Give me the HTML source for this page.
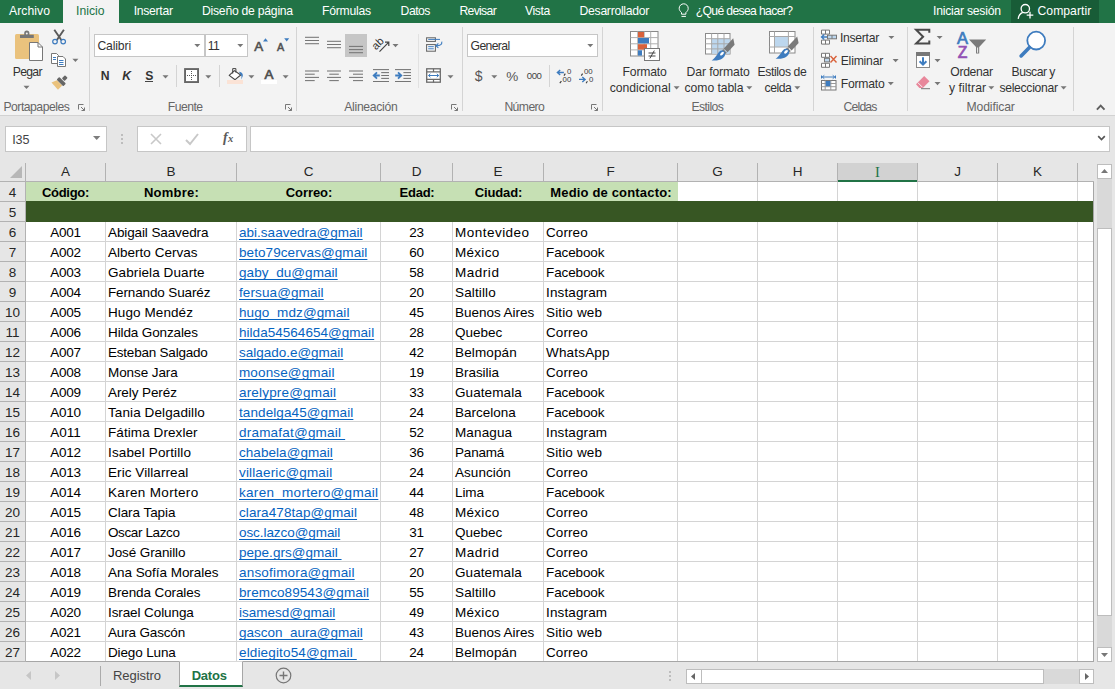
<!DOCTYPE html>
<html lang="es"><head><meta charset="utf-8"><title>Datos - Excel</title>
<style>
html,body{margin:0;padding:0;}
body{width:1115px;height:689px;overflow:hidden;background:#e6e6e6;position:relative;font-family:"Liberation Sans",sans-serif;}
.b{position:absolute;box-sizing:border-box;}
.t{position:absolute;white-space:nowrap;line-height:1;}
svg{position:absolute;overflow:visible;}
.c{position:absolute;white-space:nowrap;font-size:13.5px;line-height:20px;height:20px;color:#000;}
.lnk{color:#0563c1;text-decoration:underline;text-decoration-thickness:1px;text-underline-offset:2px;text-decoration-skip-ink:none;}
</style></head><body>
<div class="b" style="left:26px;top:182px;width:1068px;height:480px;background:#fff;"></div>
<div class="b" style="left:26px;top:201px;width:1068px;height:1px;background:#d4d4d4;"></div>
<div class="b" style="left:26px;top:221px;width:1068px;height:1px;background:#d4d4d4;"></div>
<div class="b" style="left:26px;top:241px;width:1068px;height:1px;background:#d4d4d4;"></div>
<div class="b" style="left:26px;top:261px;width:1068px;height:1px;background:#d4d4d4;"></div>
<div class="b" style="left:26px;top:281px;width:1068px;height:1px;background:#d4d4d4;"></div>
<div class="b" style="left:26px;top:301px;width:1068px;height:1px;background:#d4d4d4;"></div>
<div class="b" style="left:26px;top:321px;width:1068px;height:1px;background:#d4d4d4;"></div>
<div class="b" style="left:26px;top:341px;width:1068px;height:1px;background:#d4d4d4;"></div>
<div class="b" style="left:26px;top:361px;width:1068px;height:1px;background:#d4d4d4;"></div>
<div class="b" style="left:26px;top:381px;width:1068px;height:1px;background:#d4d4d4;"></div>
<div class="b" style="left:26px;top:401px;width:1068px;height:1px;background:#d4d4d4;"></div>
<div class="b" style="left:26px;top:421px;width:1068px;height:1px;background:#d4d4d4;"></div>
<div class="b" style="left:26px;top:441px;width:1068px;height:1px;background:#d4d4d4;"></div>
<div class="b" style="left:26px;top:461px;width:1068px;height:1px;background:#d4d4d4;"></div>
<div class="b" style="left:26px;top:481px;width:1068px;height:1px;background:#d4d4d4;"></div>
<div class="b" style="left:26px;top:501px;width:1068px;height:1px;background:#d4d4d4;"></div>
<div class="b" style="left:26px;top:521px;width:1068px;height:1px;background:#d4d4d4;"></div>
<div class="b" style="left:26px;top:541px;width:1068px;height:1px;background:#d4d4d4;"></div>
<div class="b" style="left:26px;top:561px;width:1068px;height:1px;background:#d4d4d4;"></div>
<div class="b" style="left:26px;top:581px;width:1068px;height:1px;background:#d4d4d4;"></div>
<div class="b" style="left:26px;top:601px;width:1068px;height:1px;background:#d4d4d4;"></div>
<div class="b" style="left:26px;top:621px;width:1068px;height:1px;background:#d4d4d4;"></div>
<div class="b" style="left:26px;top:641px;width:1068px;height:1px;background:#d4d4d4;"></div>
<div class="b" style="left:26px;top:661px;width:1068px;height:1px;background:#d4d4d4;"></div>
<div class="b" style="left:105px;top:182px;width:1px;height:480px;background:#d4d4d4;"></div>
<div class="b" style="left:236px;top:182px;width:1px;height:480px;background:#d4d4d4;"></div>
<div class="b" style="left:380px;top:182px;width:1px;height:480px;background:#d4d4d4;"></div>
<div class="b" style="left:452px;top:182px;width:1px;height:480px;background:#d4d4d4;"></div>
<div class="b" style="left:543px;top:182px;width:1px;height:480px;background:#d4d4d4;"></div>
<div class="b" style="left:677px;top:182px;width:1px;height:480px;background:#d4d4d4;"></div>
<div class="b" style="left:757px;top:182px;width:1px;height:480px;background:#d4d4d4;"></div>
<div class="b" style="left:837px;top:182px;width:1px;height:480px;background:#d4d4d4;"></div>
<div class="b" style="left:917px;top:182px;width:1px;height:480px;background:#d4d4d4;"></div>
<div class="b" style="left:997px;top:182px;width:1px;height:480px;background:#d4d4d4;"></div>
<div class="b" style="left:1077px;top:182px;width:1px;height:480px;background:#d4d4d4;"></div>
<div class="b" style="left:26px;top:182px;width:652px;height:20px;background:#c6e0b4;"></div>
<div class="b" style="left:26px;top:201px;width:1068px;height:21px;background:#375623;"></div>
<div class="b" style="left:1093px;top:181px;width:1px;height:481px;background:#a6a6a6;"></div>
<div class="b" style="left:0px;top:661px;width:1094px;height:1px;background:#a6a6a6;"></div>
<div class="b" style="left:0px;top:162px;width:1094px;height:20px;background:#e6e6e6;"></div>
<div class="b" style="left:0px;top:181px;width:1094px;height:1px;background:#b2b2b2;"></div>
<div class="b" style="left:25px;top:163px;width:1px;height:19px;background:#b2b2b2;"></div>
<div class="b" style="left:105px;top:163px;width:1px;height:19px;background:#b2b2b2;"></div>
<div class="b" style="left:236px;top:163px;width:1px;height:19px;background:#b2b2b2;"></div>
<div class="b" style="left:380px;top:163px;width:1px;height:19px;background:#b2b2b2;"></div>
<div class="b" style="left:452px;top:163px;width:1px;height:19px;background:#b2b2b2;"></div>
<div class="b" style="left:543px;top:163px;width:1px;height:19px;background:#b2b2b2;"></div>
<div class="b" style="left:677px;top:163px;width:1px;height:19px;background:#b2b2b2;"></div>
<div class="b" style="left:757px;top:163px;width:1px;height:19px;background:#b2b2b2;"></div>
<div class="b" style="left:837px;top:163px;width:1px;height:19px;background:#b2b2b2;"></div>
<div class="b" style="left:917px;top:163px;width:1px;height:19px;background:#b2b2b2;"></div>
<div class="b" style="left:997px;top:163px;width:1px;height:19px;background:#b2b2b2;"></div>
<div class="b" style="left:1077px;top:163px;width:1px;height:19px;background:#b2b2b2;"></div>
<div class="b" style="left:838px;top:163px;width:79px;height:18px;background:#d2d2d2;"></div>
<div class="b" style="left:838px;top:180px;width:79px;height:2px;background:#217346;"></div>
<div class="t" style="left:65.5px;top:165px;width:40px;margin-left:-20px;text-align:center;font-size:13.5px;line-height:14px;color:#262626;">A</div>
<div class="t" style="left:171px;top:165px;width:40px;margin-left:-20px;text-align:center;font-size:13.5px;line-height:14px;color:#262626;">B</div>
<div class="t" style="left:308.5px;top:165px;width:40px;margin-left:-20px;text-align:center;font-size:13.5px;line-height:14px;color:#262626;">C</div>
<div class="t" style="left:416.5px;top:165px;width:40px;margin-left:-20px;text-align:center;font-size:13.5px;line-height:14px;color:#262626;">D</div>
<div class="t" style="left:498px;top:165px;width:40px;margin-left:-20px;text-align:center;font-size:13.5px;line-height:14px;color:#262626;">E</div>
<div class="t" style="left:610.5px;top:165px;width:40px;margin-left:-20px;text-align:center;font-size:13.5px;line-height:14px;color:#262626;">F</div>
<div class="t" style="left:717.5px;top:165px;width:40px;margin-left:-20px;text-align:center;font-size:13.5px;line-height:14px;color:#262626;">G</div>
<div class="t" style="left:797.5px;top:165px;width:40px;margin-left:-20px;text-align:center;font-size:13.5px;line-height:14px;color:#262626;">H</div>
<div class="t" style="left:877.5px;top:165px;width:40px;margin-left:-20px;text-align:center;font-size:13.5px;line-height:14px;color:#217346;font-family:'Liberation Serif',serif;font-size:14.5px;">I</div>
<div class="t" style="left:957.5px;top:165px;width:40px;margin-left:-20px;text-align:center;font-size:13.5px;line-height:14px;color:#262626;">J</div>
<div class="t" style="left:1037.5px;top:165px;width:40px;margin-left:-20px;text-align:center;font-size:13.5px;line-height:14px;color:#262626;">K</div>
<svg style="left:9px;top:165px" width="14" height="14" viewBox="0 0 14 14"><path d="M13 1 V13 H1 Z" fill="#b7b7b7"/></svg>
<div class="b" style="left:0px;top:182px;width:26px;height:480px;background:#e6e6e6;"></div>
<div class="b" style="left:25px;top:182px;width:1px;height:480px;background:#b2b2b2;"></div>
<div class="b" style="left:0px;top:201px;width:25px;height:1px;background:#b2b2b2;"></div>
<div class="c" style="left:0;top:183px;width:25px;text-align:center;color:#262626;">4</div>
<div class="b" style="left:0px;top:221px;width:25px;height:1px;background:#b2b2b2;"></div>
<div class="c" style="left:0;top:203px;width:25px;text-align:center;color:#262626;">5</div>
<div class="b" style="left:0px;top:241px;width:25px;height:1px;background:#b2b2b2;"></div>
<div class="c" style="left:0;top:223px;width:25px;text-align:center;color:#262626;">6</div>
<div class="b" style="left:0px;top:261px;width:25px;height:1px;background:#b2b2b2;"></div>
<div class="c" style="left:0;top:243px;width:25px;text-align:center;color:#262626;">7</div>
<div class="b" style="left:0px;top:281px;width:25px;height:1px;background:#b2b2b2;"></div>
<div class="c" style="left:0;top:263px;width:25px;text-align:center;color:#262626;">8</div>
<div class="b" style="left:0px;top:301px;width:25px;height:1px;background:#b2b2b2;"></div>
<div class="c" style="left:0;top:283px;width:25px;text-align:center;color:#262626;">9</div>
<div class="b" style="left:0px;top:321px;width:25px;height:1px;background:#b2b2b2;"></div>
<div class="c" style="left:0;top:303px;width:25px;text-align:center;color:#262626;">10</div>
<div class="b" style="left:0px;top:341px;width:25px;height:1px;background:#b2b2b2;"></div>
<div class="c" style="left:0;top:323px;width:25px;text-align:center;color:#262626;">11</div>
<div class="b" style="left:0px;top:361px;width:25px;height:1px;background:#b2b2b2;"></div>
<div class="c" style="left:0;top:343px;width:25px;text-align:center;color:#262626;">12</div>
<div class="b" style="left:0px;top:381px;width:25px;height:1px;background:#b2b2b2;"></div>
<div class="c" style="left:0;top:363px;width:25px;text-align:center;color:#262626;">13</div>
<div class="b" style="left:0px;top:401px;width:25px;height:1px;background:#b2b2b2;"></div>
<div class="c" style="left:0;top:383px;width:25px;text-align:center;color:#262626;">14</div>
<div class="b" style="left:0px;top:421px;width:25px;height:1px;background:#b2b2b2;"></div>
<div class="c" style="left:0;top:403px;width:25px;text-align:center;color:#262626;">15</div>
<div class="b" style="left:0px;top:441px;width:25px;height:1px;background:#b2b2b2;"></div>
<div class="c" style="left:0;top:423px;width:25px;text-align:center;color:#262626;">16</div>
<div class="b" style="left:0px;top:461px;width:25px;height:1px;background:#b2b2b2;"></div>
<div class="c" style="left:0;top:443px;width:25px;text-align:center;color:#262626;">17</div>
<div class="b" style="left:0px;top:481px;width:25px;height:1px;background:#b2b2b2;"></div>
<div class="c" style="left:0;top:463px;width:25px;text-align:center;color:#262626;">18</div>
<div class="b" style="left:0px;top:501px;width:25px;height:1px;background:#b2b2b2;"></div>
<div class="c" style="left:0;top:483px;width:25px;text-align:center;color:#262626;">19</div>
<div class="b" style="left:0px;top:521px;width:25px;height:1px;background:#b2b2b2;"></div>
<div class="c" style="left:0;top:503px;width:25px;text-align:center;color:#262626;">20</div>
<div class="b" style="left:0px;top:541px;width:25px;height:1px;background:#b2b2b2;"></div>
<div class="c" style="left:0;top:523px;width:25px;text-align:center;color:#262626;">21</div>
<div class="b" style="left:0px;top:561px;width:25px;height:1px;background:#b2b2b2;"></div>
<div class="c" style="left:0;top:543px;width:25px;text-align:center;color:#262626;">22</div>
<div class="b" style="left:0px;top:581px;width:25px;height:1px;background:#b2b2b2;"></div>
<div class="c" style="left:0;top:563px;width:25px;text-align:center;color:#262626;">23</div>
<div class="b" style="left:0px;top:601px;width:25px;height:1px;background:#b2b2b2;"></div>
<div class="c" style="left:0;top:583px;width:25px;text-align:center;color:#262626;">24</div>
<div class="b" style="left:0px;top:621px;width:25px;height:1px;background:#b2b2b2;"></div>
<div class="c" style="left:0;top:603px;width:25px;text-align:center;color:#262626;">25</div>
<div class="b" style="left:0px;top:641px;width:25px;height:1px;background:#b2b2b2;"></div>
<div class="c" style="left:0;top:623px;width:25px;text-align:center;color:#262626;">26</div>
<div class="b" style="left:0px;top:661px;width:25px;height:1px;background:#b2b2b2;"></div>
<div class="c" style="left:0;top:643px;width:25px;text-align:center;color:#262626;">27</div>
<div class="c" style="left:65.5px;top:183px;width:160px;margin-left:-80px;text-align:center;font-weight:bold;font-size:13px;letter-spacing:-0.292px;">Código:</div>
<div class="c" style="left:171.5px;top:183px;width:160px;margin-left:-80px;text-align:center;font-weight:bold;font-size:13px;letter-spacing:0.253px;">Nombre:</div>
<div class="c" style="left:309px;top:183px;width:160px;margin-left:-80px;text-align:center;font-weight:bold;font-size:13px;letter-spacing:-0.075px;">Correo:</div>
<div class="c" style="left:417px;top:183px;width:160px;margin-left:-80px;text-align:center;font-weight:bold;font-size:13px;letter-spacing:-0.231px;">Edad:</div>
<div class="c" style="left:498.5px;top:183px;width:160px;margin-left:-80px;text-align:center;font-weight:bold;font-size:13px;letter-spacing:-0.153px;">Ciudad:</div>
<div class="c" style="left:611px;top:183px;width:160px;margin-left:-80px;text-align:center;font-weight:bold;font-size:13px;letter-spacing:0.170px;">Medio de contacto:</div>
<div class="c" style="left:26px;top:223px;width:79px;text-align:center;letter-spacing:-0.198px;">A001</div>
<div class="c" style="left:108px;top:223px;letter-spacing:-0.109px;">Abigail Saavedra</div>
<div class="c lnk" style="left:239px;top:223px;letter-spacing:0.018px;">abi.saavedra@gmail</div>
<div class="c" style="left:381px;top:223px;width:71px;text-align:center;letter-spacing:-0.156px;">23</div>
<div class="c" style="left:455px;top:223px;letter-spacing:0.478px;">Montevideo</div>
<div class="c" style="left:546px;top:223px;letter-spacing:0.079px;">Correo</div>
<div class="c" style="left:26px;top:243px;width:79px;text-align:center;letter-spacing:-0.198px;">A002</div>
<div class="c" style="left:108px;top:243px;letter-spacing:0.018px;">Alberto Cervas</div>
<div class="c lnk" style="left:239px;top:243px;letter-spacing:0.075px;">beto79cervas@gmail</div>
<div class="c" style="left:381px;top:243px;width:71px;text-align:center;letter-spacing:-0.156px;">60</div>
<div class="c" style="left:455px;top:243px;letter-spacing:0.286px;">México</div>
<div class="c" style="left:546px;top:243px;letter-spacing:-0.111px;">Facebook</div>
<div class="c" style="left:26px;top:263px;width:79px;text-align:center;letter-spacing:-0.198px;">A003</div>
<div class="c" style="left:108px;top:263px;letter-spacing:0.093px;">Gabriela Duarte</div>
<div class="c lnk" style="left:239px;top:263px;letter-spacing:0.070px;">gaby_du@gmail</div>
<div class="c" style="left:381px;top:263px;width:71px;text-align:center;letter-spacing:-0.156px;">58</div>
<div class="c" style="left:455px;top:263px;letter-spacing:0.529px;">Madrid</div>
<div class="c" style="left:546px;top:263px;letter-spacing:-0.111px;">Facebook</div>
<div class="c" style="left:26px;top:283px;width:79px;text-align:center;letter-spacing:-0.198px;">A004</div>
<div class="c" style="left:108px;top:283px;letter-spacing:-0.135px;">Fernando Suaréz</div>
<div class="c lnk" style="left:239px;top:283px;letter-spacing:0.103px;">fersua@gmail</div>
<div class="c" style="left:381px;top:283px;width:71px;text-align:center;letter-spacing:-0.156px;">20</div>
<div class="c" style="left:455px;top:283px;letter-spacing:0.126px;">Saltillo</div>
<div class="c" style="left:546px;top:283px;letter-spacing:0.130px;">Instagram</div>
<div class="c" style="left:26px;top:303px;width:79px;text-align:center;letter-spacing:-0.198px;">A005</div>
<div class="c" style="left:108px;top:303px;letter-spacing:0.088px;">Hugo Mendéz</div>
<div class="c lnk" style="left:239px;top:303px;letter-spacing:0.107px;">hugo_mdz@gmail</div>
<div class="c" style="left:381px;top:303px;width:71px;text-align:center;letter-spacing:-0.156px;">45</div>
<div class="c" style="left:455px;top:303px;letter-spacing:-0.027px;">Buenos Aires</div>
<div class="c" style="left:546px;top:303px;letter-spacing:0.154px;">Sitio web</div>
<div class="c" style="left:26px;top:323px;width:79px;text-align:center;letter-spacing:-0.198px;">A006</div>
<div class="c" style="left:108px;top:323px;letter-spacing:-0.123px;">Hilda Gonzales</div>
<div class="c lnk" style="left:239px;top:323px;letter-spacing:0.033px;">hilda54564654@gmail</div>
<div class="c" style="left:381px;top:323px;width:71px;text-align:center;letter-spacing:-0.156px;">28</div>
<div class="c" style="left:455px;top:323px;letter-spacing:-0.027px;">Quebec</div>
<div class="c" style="left:546px;top:323px;letter-spacing:0.079px;">Correo</div>
<div class="c" style="left:26px;top:343px;width:79px;text-align:center;letter-spacing:-0.198px;">A007</div>
<div class="c" style="left:108px;top:343px;letter-spacing:-0.217px;">Esteban Salgado</div>
<div class="c lnk" style="left:239px;top:343px;letter-spacing:-0.014px;">salgado.e@gmail</div>
<div class="c" style="left:381px;top:343px;width:71px;text-align:center;letter-spacing:-0.156px;">42</div>
<div class="c" style="left:455px;top:343px;letter-spacing:0.139px;">Belmopán</div>
<div class="c" style="left:546px;top:343px;letter-spacing:0.183px;">WhatsApp</div>
<div class="c" style="left:26px;top:363px;width:79px;text-align:center;letter-spacing:-0.198px;">A008</div>
<div class="c" style="left:108px;top:363px;letter-spacing:-0.082px;">Monse Jara</div>
<div class="c lnk" style="left:239px;top:363px;letter-spacing:0.128px;">moonse@gmail</div>
<div class="c" style="left:381px;top:363px;width:71px;text-align:center;letter-spacing:-0.156px;">19</div>
<div class="c" style="left:455px;top:363px;letter-spacing:-0.039px;">Brasilia</div>
<div class="c" style="left:546px;top:363px;letter-spacing:0.079px;">Correo</div>
<div class="c" style="left:26px;top:383px;width:79px;text-align:center;letter-spacing:-0.198px;">A009</div>
<div class="c" style="left:108px;top:383px;letter-spacing:-0.086px;">Arely Peréz</div>
<div class="c lnk" style="left:239px;top:383px;letter-spacing:0.176px;">arelypre@gmail</div>
<div class="c" style="left:381px;top:383px;width:71px;text-align:center;letter-spacing:-0.156px;">33</div>
<div class="c" style="left:455px;top:383px;letter-spacing:0.086px;">Guatemala</div>
<div class="c" style="left:546px;top:383px;letter-spacing:-0.111px;">Facebook</div>
<div class="c" style="left:26px;top:403px;width:79px;text-align:center;letter-spacing:-0.198px;">A010</div>
<div class="c" style="left:108px;top:403px;letter-spacing:0.099px;">Tania Delgadillo</div>
<div class="c lnk" style="left:239px;top:403px;letter-spacing:0.098px;">tandelga45@gmail</div>
<div class="c" style="left:381px;top:403px;width:71px;text-align:center;letter-spacing:-0.156px;">24</div>
<div class="c" style="left:455px;top:403px;letter-spacing:0.001px;">Barcelona</div>
<div class="c" style="left:546px;top:403px;letter-spacing:-0.111px;">Facebook</div>
<div class="c" style="left:26px;top:423px;width:79px;text-align:center;letter-spacing:0.052px;">A011</div>
<div class="c" style="left:108px;top:423px;letter-spacing:0.081px;">Fátima Drexler</div>
<div class="c lnk" style="left:239px;top:423px;letter-spacing:0.211px;">dramafat@gmail </div>
<div class="c" style="left:381px;top:423px;width:71px;text-align:center;letter-spacing:-0.156px;">52</div>
<div class="c" style="left:455px;top:423px;letter-spacing:0.129px;">Managua</div>
<div class="c" style="left:546px;top:423px;letter-spacing:0.130px;">Instagram</div>
<div class="c" style="left:26px;top:443px;width:79px;text-align:center;letter-spacing:-0.198px;">A012</div>
<div class="c" style="left:108px;top:443px;letter-spacing:0.141px;">Isabel Portillo</div>
<div class="c lnk" style="left:239px;top:443px;letter-spacing:0.050px;">chabela@gmail</div>
<div class="c" style="left:381px;top:443px;width:71px;text-align:center;letter-spacing:-0.156px;">36</div>
<div class="c" style="left:455px;top:443px;letter-spacing:-0.186px;">Panamá</div>
<div class="c" style="left:546px;top:443px;letter-spacing:0.154px;">Sitio web</div>
<div class="c" style="left:26px;top:463px;width:79px;text-align:center;letter-spacing:-0.198px;">A013</div>
<div class="c" style="left:108px;top:463px;letter-spacing:0.068px;">Eric Villarreal</div>
<div class="c lnk" style="left:239px;top:463px;letter-spacing:0.154px;">villaeric@gmail</div>
<div class="c" style="left:381px;top:463px;width:71px;text-align:center;letter-spacing:-0.156px;">24</div>
<div class="c" style="left:455px;top:463px;letter-spacing:0.043px;">Asunción</div>
<div class="c" style="left:546px;top:463px;letter-spacing:0.079px;">Correo</div>
<div class="c" style="left:26px;top:483px;width:79px;text-align:center;letter-spacing:-0.198px;">A014</div>
<div class="c" style="left:108px;top:483px;letter-spacing:0.326px;">Karen Mortero</div>
<div class="c lnk" style="left:239px;top:483px;letter-spacing:0.293px;">karen_mortero@gmail</div>
<div class="c" style="left:381px;top:483px;width:71px;text-align:center;letter-spacing:-0.156px;">44</div>
<div class="c" style="left:455px;top:483px;letter-spacing:-0.087px;">Lima</div>
<div class="c" style="left:546px;top:483px;letter-spacing:-0.111px;">Facebook</div>
<div class="c" style="left:26px;top:503px;width:79px;text-align:center;letter-spacing:-0.198px;">A015</div>
<div class="c" style="left:108px;top:503px;letter-spacing:-0.055px;">Clara Tapia</div>
<div class="c lnk" style="left:239px;top:503px;letter-spacing:0.090px;">clara478tap@gmail</div>
<div class="c" style="left:381px;top:503px;width:71px;text-align:center;letter-spacing:-0.156px;">48</div>
<div class="c" style="left:455px;top:503px;letter-spacing:0.286px;">México</div>
<div class="c" style="left:546px;top:503px;letter-spacing:0.079px;">Correo</div>
<div class="c" style="left:26px;top:523px;width:79px;text-align:center;letter-spacing:-0.198px;">A016</div>
<div class="c" style="left:108px;top:523px;letter-spacing:-0.379px;">Oscar Lazco</div>
<div class="c lnk" style="left:239px;top:523px;letter-spacing:-0.067px;">osc.lazco@gmail</div>
<div class="c" style="left:381px;top:523px;width:71px;text-align:center;letter-spacing:-0.156px;">31</div>
<div class="c" style="left:455px;top:523px;letter-spacing:-0.027px;">Quebec</div>
<div class="c" style="left:546px;top:523px;letter-spacing:0.079px;">Correo</div>
<div class="c" style="left:26px;top:543px;width:79px;text-align:center;letter-spacing:-0.198px;">A017</div>
<div class="c" style="left:108px;top:543px;letter-spacing:-0.106px;">José Granillo</div>
<div class="c lnk" style="left:239px;top:543px;letter-spacing:0.019px;">pepe.grs@gmail </div>
<div class="c" style="left:381px;top:543px;width:71px;text-align:center;letter-spacing:-0.156px;">27</div>
<div class="c" style="left:455px;top:543px;letter-spacing:0.529px;">Madrid</div>
<div class="c" style="left:546px;top:543px;letter-spacing:0.079px;">Correo</div>
<div class="c" style="left:26px;top:563px;width:79px;text-align:center;letter-spacing:-0.198px;">A018</div>
<div class="c" style="left:108px;top:563px;letter-spacing:-0.036px;">Ana Sofía Morales</div>
<div class="c lnk" style="left:239px;top:563px;letter-spacing:0.184px;">ansofimora@gmail</div>
<div class="c" style="left:381px;top:563px;width:71px;text-align:center;letter-spacing:-0.156px;">20</div>
<div class="c" style="left:455px;top:563px;letter-spacing:0.086px;">Guatemala</div>
<div class="c" style="left:546px;top:563px;letter-spacing:-0.111px;">Facebook</div>
<div class="c" style="left:26px;top:583px;width:79px;text-align:center;letter-spacing:-0.198px;">A019</div>
<div class="c" style="left:108px;top:583px;letter-spacing:-0.109px;">Brenda Corales</div>
<div class="c lnk" style="left:239px;top:583px;letter-spacing:0.092px;">bremco89543@gmail</div>
<div class="c" style="left:381px;top:583px;width:71px;text-align:center;letter-spacing:-0.156px;">55</div>
<div class="c" style="left:455px;top:583px;letter-spacing:0.126px;">Saltillo</div>
<div class="c" style="left:546px;top:583px;letter-spacing:-0.111px;">Facebook</div>
<div class="c" style="left:26px;top:603px;width:79px;text-align:center;letter-spacing:-0.198px;">A020</div>
<div class="c" style="left:108px;top:603px;letter-spacing:-0.096px;">Israel Colunga</div>
<div class="c lnk" style="left:239px;top:603px;letter-spacing:-0.002px;">isamesd@gmail</div>
<div class="c" style="left:381px;top:603px;width:71px;text-align:center;letter-spacing:-0.156px;">49</div>
<div class="c" style="left:455px;top:603px;letter-spacing:0.286px;">México</div>
<div class="c" style="left:546px;top:603px;letter-spacing:0.130px;">Instagram</div>
<div class="c" style="left:26px;top:623px;width:79px;text-align:center;letter-spacing:-0.198px;">A021</div>
<div class="c" style="left:108px;top:623px;letter-spacing:-0.162px;">Aura Gascón</div>
<div class="c lnk" style="left:239px;top:623px;letter-spacing:-0.018px;">gascon_aura@gmail</div>
<div class="c" style="left:381px;top:623px;width:71px;text-align:center;letter-spacing:-0.156px;">43</div>
<div class="c" style="left:455px;top:623px;letter-spacing:-0.027px;">Buenos Aires</div>
<div class="c" style="left:546px;top:623px;letter-spacing:0.154px;">Sitio web</div>
<div class="c" style="left:26px;top:643px;width:79px;text-align:center;letter-spacing:-0.198px;">A022</div>
<div class="c" style="left:108px;top:643px;letter-spacing:-0.131px;">Diego Luna</div>
<div class="c lnk" style="left:239px;top:643px;letter-spacing:0.151px;">eldiegito54@gmail </div>
<div class="c" style="left:381px;top:643px;width:71px;text-align:center;letter-spacing:-0.156px;">24</div>
<div class="c" style="left:455px;top:643px;letter-spacing:0.139px;">Belmopán</div>
<div class="c" style="left:546px;top:643px;letter-spacing:0.079px;">Correo</div>
<div class="b" style="left:0px;top:0px;width:1115px;height:23px;background:#217346;"></div>
<div class="b" style="left:63px;top:0px;width:56px;height:24px;background:#f3f3f3;"></div>
<div class="b" style="left:1011px;top:0px;width:88px;height:23px;background:#185c37;"></div>
<div class="t " style="left:9px;top:5px;font-size:12.2px;color:#fff;letter-spacing:0.045px;">Archivo</div>
<div class="t " style="left:76px;top:5px;font-size:12.2px;color:#217346;letter-spacing:0.003px;">Inicio</div>
<div class="t " style="left:133.7px;top:5px;font-size:12.2px;color:#fff;letter-spacing:-0.295px;">Insertar</div>
<div class="t " style="left:202px;top:5px;font-size:12.2px;color:#fff;letter-spacing:-0.248px;">Diseño de página</div>
<div class="t " style="left:322px;top:5px;font-size:12.2px;color:#fff;letter-spacing:-0.231px;">Fórmulas</div>
<div class="t " style="left:400.6px;top:5px;font-size:12.2px;color:#fff;letter-spacing:-0.494px;">Datos</div>
<div class="t " style="left:459.4px;top:5px;font-size:12.2px;color:#fff;letter-spacing:-0.665px;">Revisar</div>
<div class="t " style="left:525px;top:5px;font-size:12.2px;color:#fff;letter-spacing:-0.381px;">Vista</div>
<div class="t " style="left:579.6px;top:5px;font-size:12.2px;color:#fff;letter-spacing:-0.295px;">Desarrollador</div>
<div class="t " style="left:695.7px;top:5px;font-size:12.2px;color:#fff;letter-spacing:-0.655px;">¿Qué desea hacer?</div>
<div class="t " style="left:933px;top:5px;font-size:12.2px;color:#fff;letter-spacing:-0.243px;">Iniciar sesión</div>
<div class="t " style="left:1037.5px;top:5px;font-size:12.2px;color:#fff;letter-spacing:0.027px;">Compartir</div>
<div class="b" style="left:0px;top:23px;width:1115px;height:93px;background:#f3f3f3;border-bottom:1px solid #d2d2d2;"></div>
<div class="b" style="left:89px;top:27px;width:1px;height:84px;background:#d4d4d4;"></div>
<div class="b" style="left:296px;top:27px;width:1px;height:84px;background:#d4d4d4;"></div>
<div class="b" style="left:462px;top:27px;width:1px;height:84px;background:#d4d4d4;"></div>
<div class="b" style="left:602px;top:27px;width:1px;height:84px;background:#d4d4d4;"></div>
<div class="b" style="left:813px;top:27px;width:1px;height:84px;background:#d4d4d4;"></div>
<div class="b" style="left:907px;top:27px;width:1px;height:84px;background:#d4d4d4;"></div>
<div class="b" style="left:1073px;top:27px;width:1px;height:84px;background:#d4d4d4;"></div>
<div class="b" style="left:176px;top:65px;width:1px;height:22px;background:#d4d4d4;"></div>
<div class="b" style="left:219px;top:65px;width:1px;height:22px;background:#d4d4d4;"></div>
<div class="b" style="left:549px;top:65px;width:1px;height:22px;background:#d4d4d4;"></div>
<div class="b" style="left:418px;top:34px;width:1px;height:54px;background:#e1e1e1;"></div>
<div class="t " style="left:3.4px;top:101px;font-size:12.2px;color:#666;letter-spacing:-0.492px;">Portapapeles</div>
<div class="t " style="left:167.8px;top:101px;font-size:12.2px;color:#666;letter-spacing:-0.547px;">Fuente</div>
<div class="t " style="left:344.3px;top:101px;font-size:12.2px;color:#666;letter-spacing:-0.320px;">Alineación</div>
<div class="t " style="left:504.4px;top:101px;font-size:12.2px;color:#666;letter-spacing:-0.582px;">Número</div>
<div class="t " style="left:691.5px;top:101px;font-size:12.2px;color:#666;letter-spacing:-0.605px;">Estilos</div>
<div class="t " style="left:843.6px;top:101px;font-size:12.2px;color:#666;letter-spacing:-0.830px;">Celdas</div>
<div class="t " style="left:966.6px;top:101px;font-size:12.2px;color:#666;letter-spacing:-0.144px;">Modificar</div>
<div class="t " style="left:12.7px;top:66px;font-size:12.2px;color:#333;letter-spacing:-0.691px;">Pegar</div>
<div class="b" style="left:94px;top:34px;width:111px;height:23px;background:#fff;border:1px solid #c6c6c6;"></div>
<div class="b" style="left:205px;top:34px;width:43px;height:23px;background:#fff;border:1px solid #c6c6c6;"></div>
<div class="t " style="left:97.4px;top:40px;font-size:12.2px;color:#333;letter-spacing:-0.140px;">Calibri</div>
<div class="t " style="left:207.7px;top:40px;font-size:12.2px;color:#333;letter-spacing:-0.633px;">11</div>
<div class="t " style="left:254.3px;top:40px;font-size:13.4px;color:#505050;letter-spacing:0.662px;-webkit-text-stroke:0.6px #505050;">A</div>
<div class="t " style="left:277px;top:42px;font-size:10.8px;color:#505050;letter-spacing:0.696px;-webkit-text-stroke:0.5px #505050;">A</div>
<div class="t " style="left:100.7px;top:70px;font-size:12.2px;color:#333;letter-spacing:-0.111px;font-weight:bold;">N</div>
<div class="t " style="left:122.2px;top:70px;font-size:12.2px;color:#333;letter-spacing:-0.211px;font-weight:bold;font-style:italic;">K</div>
<div class="t " style="left:145.2px;top:70px;font-size:12.2px;color:#333;letter-spacing:-0.538px;font-weight:bold;">S</div>
<div class="b" style="left:145px;top:81px;width:8px;height:1px;background:#444;"></div>
<div class="t " style="left:264.6px;top:68px;font-size:13.4px;color:#505050;letter-spacing:0.462px;-webkit-text-stroke:0.7px #505050;">A</div>
<div class="b" style="left:345px;top:34px;width:22px;height:23px;background:#c6c6c6;"></div>
<div class="b" style="left:467px;top:34px;width:131px;height:23px;background:#fff;border:1px solid #c6c6c6;"></div>
<div class="t " style="left:470.6px;top:40px;font-size:12.2px;color:#333;letter-spacing:-0.643px;">General</div>
<div class="t " style="left:474.8px;top:69px;font-size:14px;color:#555;letter-spacing:-0.386px;">$</div>
<div class="t " style="left:506.3px;top:70px;font-size:13.5px;color:#555;letter-spacing:0.197px;">%</div>
<div class="t " style="left:526.8px;top:71px;font-size:9.6px;color:#444;letter-spacing:-0.506px;">000</div>
<div class="t " style="left:622.6px;top:66px;font-size:12.2px;color:#333;letter-spacing:-0.203px;">Formato</div>
<div class="t " style="left:609.7px;top:82px;font-size:12.2px;color:#333;letter-spacing:-0.004px;">condicional</div>
<div class="t " style="left:686.6px;top:66px;font-size:12.2px;color:#333;letter-spacing:-0.119px;">Dar formato</div>
<div class="t " style="left:684.6px;top:82px;font-size:12.2px;color:#333;letter-spacing:-0.078px;">como tabla</div>
<div class="t " style="left:757.6px;top:66px;font-size:12.2px;color:#333;letter-spacing:-0.419px;">Estilos de</div>
<div class="t " style="left:764.6px;top:82px;font-size:12.2px;color:#333;letter-spacing:-0.473px;">celda</div>
<div class="t " style="left:840px;top:32px;font-size:12.2px;color:#333;letter-spacing:-0.295px;">Insertar</div>
<div class="t " style="left:840.7px;top:55px;font-size:12.2px;color:#333;letter-spacing:-0.196px;">Eliminar</div>
<div class="t " style="left:840.7px;top:78px;font-size:12.2px;color:#333;letter-spacing:-0.218px;">Formato</div>
<div class="t " style="left:950.3px;top:66px;font-size:12.2px;color:#333;letter-spacing:-0.337px;">Ordenar</div>
<div class="t " style="left:949px;top:82px;font-size:12.2px;color:#333;letter-spacing:0.067px;">y filtrar</div>
<div class="t " style="left:1011.6px;top:66px;font-size:12.2px;color:#333;letter-spacing:-0.508px;">Buscar y</div>
<div class="t " style="left:999.4px;top:82px;font-size:12.2px;color:#333;letter-spacing:-0.301px;">seleccionar</div>
<svg style="left:0;top:0" width="1115" height="120" viewBox="0 0 1115 120"><path d="M78.5 109.5V104.5H83.5" fill="none" stroke="#777" stroke-width="1"/><path d="M81 107L84.5 110.5 M84.5 107.5V110.5H81.5" fill="none" stroke="#777" stroke-width="1"/><path d="M285.5 109.5V104.5H290.5" fill="none" stroke="#777" stroke-width="1"/><path d="M288 107L291.5 110.5 M291.5 107.5V110.5H288.5" fill="none" stroke="#777" stroke-width="1"/><path d="M451.5 109.5V104.5H456.5" fill="none" stroke="#777" stroke-width="1"/><path d="M454 107L457.5 110.5 M457.5 107.5V110.5H454.5" fill="none" stroke="#777" stroke-width="1"/><path d="M591.5 109.5V104.5H596.5" fill="none" stroke="#777" stroke-width="1"/><path d="M594 107L597.5 110.5 M597.5 107.5V110.5H594.5" fill="none" stroke="#777" stroke-width="1"/><rect x="15" y="34" width="24" height="25" rx="1.5" fill="#eac27d"/><path d="M20 38v-3.2h4.2v-1.6a2.6 2.6 0 0 1 5.2 0v1.6h4.4V38z" fill="#777"/><circle cx="26.8" cy="33.6" r="1" fill="#f3f3f3"/><path d="M29.5 42.5h8.5l4.5 4.5v13.5h-13z" fill="#fff" stroke="#777" stroke-width="1"/><path d="M38 42.5v4.5h4.5" fill="none" stroke="#777" stroke-width="1"/><path d="M23.5 85.7h6l-3 3.2z" fill="#777"/><path d="M54.3 29.8l7.2 10.4M63.9 29.8l-7.2 10.4" stroke="#5a5a5a" stroke-width="1.9" fill="none"/><circle cx="55" cy="41.6" r="2.3" fill="none" stroke="#3e7cbf" stroke-width="1.2"/><circle cx="63.2" cy="41.6" r="2.3" fill="none" stroke="#3e7cbf" stroke-width="1.2"/><path d="M51.5 53.5h5l2 2v8h-7z" fill="#fff" stroke="#777" stroke-width="1"/><path d="M53 57.5h3M53 59.5h3" stroke="#3e7cbf" stroke-width="1"/><path d="M57.5 56.5h5.5l2.5 2.5v7.5h-8z" fill="#fff" stroke="#777" stroke-width="1"/><path d="M59 60.5h4.5M59 62.5h4.5M59 64.5h4.5" stroke="#3e7cbf" stroke-width="1"/><path d="M72.4 58.8h6l-3 3.2z" fill="#777"/><g transform="translate(61.3,81.6) rotate(-45)"><path d="M-2.2 -4.1V3.4H-8.1L-7.5 -6.4z" fill="#eac27d"/><rect x="-1.9" y="-4.7" width="3.7" height="9.4" rx="0.8" fill="#666"/><rect x="2.7" y="-1.9" width="4.4" height="3.8" rx="0.8" fill="#666"/></g><path d="M194.3 44.1h6l-3 3.2z" fill="#777"/><path d="M237.3 44.1h6l-3 3.2z" fill="#777"/><path d="M263 41.5h5l-2.5-3.2z" fill="#3e7cbf"/><path d="M284.2 38.3h5l-2.5 3.2z" fill="#3e7cbf"/><path d="M162.5 75.2h6l-3 3.2z" fill="#777"/><rect x="185.05" y="69.05" width="13" height="13" fill="#fff" stroke="#666" stroke-width="1.9"/><rect x="187" y="75" width="1" height="1" fill="#555"/><rect x="189" y="75" width="1" height="1" fill="#555"/><rect x="191" y="75" width="1" height="1" fill="#555"/><rect x="193" y="75" width="1" height="1" fill="#555"/><rect x="195" y="75" width="1" height="1" fill="#555"/><rect x="191" y="71" width="1" height="1" fill="#555"/><rect x="191" y="73" width="1" height="1" fill="#555"/><rect x="191" y="77" width="1" height="1" fill="#555"/><rect x="191" y="79" width="1" height="1" fill="#555"/><path d="M205.3 75.2h6l-3 3.2z" fill="#777"/><path d="M229.2 75.4l5.2-4.8 6.3 4.4-5.6 4.7z" fill="#fff" stroke="#444" stroke-width="1.1" stroke-linejoin="round"/><path d="M232.7 73.6v-5h3.2v4" fill="none" stroke="#444" stroke-width="1"/><path d="M239 71.7c3.6 0.4 5.6 3.6 1.9 7.7c0.9-2 0.9-3.4-0.2-4.4z" fill="#3e7cbf"/><rect x="227" y="80" width="16" height="4" fill="#fbe3d6"/><path d="M248.4 75.2h6l-3 3.2z" fill="#777"/><rect x="261" y="80" width="16" height="4" fill="#fff"/><path d="M282.6 75.2h6l-3 3.2z" fill="#777"/><path d="M305 37.3H319" stroke="#757575" stroke-width="1.05"/><path d="M305 40.5H319" stroke="#757575" stroke-width="1.05"/><path d="M305 43.7H319" stroke="#757575" stroke-width="1.05"/><path d="M327 41.3H341" stroke="#757575" stroke-width="1.05"/><path d="M327 44.5H341" stroke="#757575" stroke-width="1.05"/><path d="M327 47.7H341" stroke="#757575" stroke-width="1.05"/><path d="M349 46.4H363" stroke="#757575" stroke-width="1.05"/><path d="M349 49.6H363" stroke="#757575" stroke-width="1.05"/><path d="M349 52.7H363" stroke="#757575" stroke-width="1.05"/><path d="M305 71H319" stroke="#757575" stroke-width="1.05"/><path d="M305 74.2H314.7" stroke="#757575" stroke-width="1.05"/><path d="M305 77.4H319" stroke="#757575" stroke-width="1.05"/><path d="M305 80.6H314.7" stroke="#757575" stroke-width="1.05"/><path d="M327 71H341" stroke="#757575" stroke-width="1.05"/><path d="M329.3 74.2H338.8" stroke="#757575" stroke-width="1.05"/><path d="M327 77.4H341" stroke="#757575" stroke-width="1.05"/><path d="M329.3 80.6H338.8" stroke="#757575" stroke-width="1.05"/><path d="M349 71H363" stroke="#757575" stroke-width="1.05"/><path d="M353 74.2H363" stroke="#757575" stroke-width="1.05"/><path d="M349 77.4H363" stroke="#757575" stroke-width="1.05"/><path d="M353 80.6H363" stroke="#757575" stroke-width="1.05"/><text x="0" y="0" transform="translate(375.9,50.4) rotate(-45)" font-family="Liberation Sans, sans-serif" font-size="11" fill="#333">ab</text><path d="M379.5 51.6L388.6 42.4M385 42.2h3.8v3.8" fill="none" stroke="#444" stroke-width="1.2"/><path d="M392.5 44.1h6l-3 3.2z" fill="#777"/><path d="M373 69.6H389" stroke="#757575" stroke-width="1.05"/><path d="M373 81.5H389" stroke="#757575" stroke-width="1.05"/><path d="M381.2 72.6H389" stroke="#757575" stroke-width="1.05"/><path d="M381.2 75.5H389" stroke="#757575" stroke-width="1.05"/><path d="M381.2 78.4H389" stroke="#757575" stroke-width="1.05"/><path d="M395 69.6H411" stroke="#757575" stroke-width="1.05"/><path d="M395 81.5H411" stroke="#757575" stroke-width="1.05"/><path d="M403.4 72.6H411" stroke="#757575" stroke-width="1.05"/><path d="M403.4 75.5H411" stroke="#757575" stroke-width="1.05"/><path d="M403.4 78.4H411" stroke="#757575" stroke-width="1.05"/><path d="M379.8 75.5h-5.5M377 72.4l-3.3 3.1 3.3 3.1" fill="none" stroke="#3e7cbf" stroke-width="1.8"/><path d="M395.2 75.5h5.5M398 72.4l3.3 3.1-3.3 3.1" fill="none" stroke="#3e7cbf" stroke-width="1.8"/><rect x="426.6" y="37.8" width="8.8" height="3.6" fill="#fff" stroke="#6a6a6a" stroke-width="1.1"/><rect x="426.6" y="44.6" width="8.8" height="6.6" fill="#fff" stroke="#6a6a6a" stroke-width="1.1"/><path d="M428.2 39.4h11.8M428.2 46.7h5.6M428.2 48.8h5.6" stroke="#3e7cbf" stroke-width="1"/><path d="M441.8 41.6c0.3 2.6-1 4.1-5.6 4.1M438.4 43.5l-2.6 2.2 2.6 2.2" fill="none" stroke="#3e7cbf" stroke-width="1.1"/><rect x="426.7" y="68.8" width="13.6" height="13.4" fill="#fff" stroke="#6a6a6a" stroke-width="1.3"/><path d="M426.7 71.8h13.6M426.7 79.4h13.6M433.5 68.8v3M433.5 79.4v3" stroke="#6a6a6a" stroke-width="1.2"/><path d="M428.6 75.5h10M430.4 73.8l-1.9 1.7 1.9 1.7M436.8 73.8l1.9 1.7-1.9 1.7" fill="none" stroke="#3e7cbf" stroke-width="1"/><path d="M447.5 75.2h6l-3 3.2z" fill="#777"/><path d="M587.3 44.1h6l-3 3.2z" fill="#777"/><path d="M491.3 75.2h6l-3 3.2z" fill="#777"/><text x="566.9" y="74.3" font-family="Liberation Sans, sans-serif" font-size="7.8" fill="#3a3a3a">0</text><text x="562.6" y="81.6" font-family="Liberation Sans, sans-serif" font-size="7.8" fill="#3a3a3a">00</text><path d="M565.3 73.6l-1.3 2M561.4 81.2l-1.6 2" stroke="#3a3a3a" stroke-width="1.1"/><path d="M563.9 72.5h-6M560.2 70l-2.8 2.5 2.8 2.5" fill="none" stroke="#3e7cbf" stroke-width="1.4"/><text x="583.9" y="74.3" font-family="Liberation Sans, sans-serif" font-size="7.8" fill="#3a3a3a">00</text><text x="588.9" y="81.6" font-family="Liberation Sans, sans-serif" font-size="7.8" fill="#3a3a3a">0</text><path d="M582.6 73.6l-1.3 2M587.4 81.2l-1.3 2" stroke="#3a3a3a" stroke-width="1.1"/><path d="M579 79.4h6M582.3 76.9l2.8 2.5-2.8 2.5" fill="none" stroke="#3e7cbf" stroke-width="1.4"/><rect x="630.5" y="31.5" width="27.5" height="24.5" fill="#fff" stroke="#8a8a8a"/><path d="M637.7 31.5v24.5M644.2 31.5v24.5M650.7 31.5v24.5M630.5 37.6h27.5M630.5 43.8h27.5M630.5 49.9h27.5" stroke="#b0b0b0" stroke-width="1"/><rect x="638" y="32" width="6" height="5.3" fill="#d9623b"/><rect x="638" y="38" width="11" height="5.4" fill="#3e7cbf"/><rect x="638" y="44.2" width="9" height="5.4" fill="#d9623b"/><rect x="638" y="50.3" width="4" height="5.3" fill="#3e7cbf"/><rect x="644.5" y="48.5" width="15" height="12" fill="#fff" stroke="#777"/><path d="M648.5 53h7M648.5 56h7M654.3 50.6l-4.4 7.8" stroke="#444" stroke-width="1" fill="none"/><path d="M673.6 86.2h6l-3 3.2z" fill="#777"/><rect x="705.5" y="33.5" width="24.5" height="20.5" fill="#fff" stroke="#8a8a8a"/><rect x="711.8" y="38.8" width="18" height="15" fill="#bdd7ee"/><path d="M711.6 33.5v20.5M717.8 33.5v20.5M724 33.5v20.5M705.5 38.7h24.5M705.5 43.8h24.5M705.5 48.9h24.5" stroke="#a8a8a8" stroke-width="1"/><g transform="translate(711.6,38.6)"><path d="M21.6 -0.4l1.4 6.6-7 7.4-3.8-3.8z" fill="#7a7a7a"/><path d="M11.6 10.6l3.6 3.6-1.2 1.2-3.6-3.6z" fill="#7a7a7a"/><path d="M0 22c4.2-2.6 5.4-7 8.8-9.8c3-1.2 5.6 1.4 4.6 4.4c-2 4.2-5.4 5.4-13.4 5.4z" fill="#3e7cbf"/><ellipse cx="10.4" cy="15" rx="1.3" ry="2.3" transform="rotate(48 10.4 15)" fill="#fff"/></g><path d="M746.3 86.2h6l-3 3.2z" fill="#777"/><rect x="769.5" y="31.5" width="25.5" height="21.5" fill="#fff" stroke="#8a8a8a"/><rect x="774.6" y="36.6" width="13.8" height="10.3" fill="#bdd7ee"/><path d="M774.5 31.5v21.5M788.4 31.5v21.5M769.5 36.5h25.5M769.5 47h25.5" stroke="#a8a8a8" stroke-width="1"/><g transform="translate(775.6,36.8)"><path d="M21.6 -0.4l1.4 6.6-7 7.4-3.8-3.8z" fill="#7a7a7a"/><path d="M11.6 10.6l3.6 3.6-1.2 1.2-3.6-3.6z" fill="#7a7a7a"/><path d="M0 22c4.2-2.6 5.4-7 8.8-9.8c3-1.2 5.6 1.4 4.6 4.4c-2 4.2-5.4 5.4-13.4 5.4z" fill="#3e7cbf"/><ellipse cx="10.4" cy="15" rx="1.3" ry="2.3" transform="rotate(48 10.4 15)" fill="#fff"/></g><path d="M794.3 86.2h6l-3 3.2z" fill="#777"/><path d="M821.5 30.1h8v4h-8zM825.5 30.1v4" fill="#fff" stroke="#777" stroke-width="1"/><path d="M821.5 40.1h8v4h-8zM825.5 40.1v4" fill="#fff" stroke="#777" stroke-width="1"/><rect x="827.5" y="35.2" width="9" height="3.6" fill="#bdd7ee" stroke="#777"/><path d="M832 35.2v3.6" stroke="#777"/><path d="M827 37h-5.5M824.3 34.6l-2.8 2.4 2.8 2.4" fill="none" stroke="#3e7cbf" stroke-width="1.3"/><path d="M888.4 35.9h6l-3 3.2z" fill="#777"/><path d="M821.5 53.3h8v4h-8zM825.5 53.3v4" fill="#fff" stroke="#777" stroke-width="1"/><path d="M821.5 63.3h8v4h-8zM825.5 63.3v4" fill="#fff" stroke="#777" stroke-width="1"/><rect x="824.5" y="58.3" width="5" height="3.6" fill="#bdd7ee" stroke="#777"/><path d="M830.5 56l6 6.5M836.5 56l-6 6.5" stroke="#d9623b" stroke-width="1.4" fill="none"/><path d="M892.6 59h6l-3 3.2z" fill="#777"/><path d="M821.5 75.5v3M835.5 75.5v3M822 77h13M824.3 75.3l-2 1.7 2 1.7M832.7 75.3l2 1.7-2 1.7" fill="none" stroke="#3e7cbf" stroke-width="1"/><rect x="821.5" y="80.5" width="14.5" height="9.5" fill="#fff" stroke="#777"/><path d="M821.5 83.5h14.5M821.5 86.7h14.5M825.2 80.5v9.5M830.8 80.5v9.5" stroke="#999" stroke-width="1"/><rect x="825.7" y="81" width="4.6" height="5.2" fill="#3e7cbf"/><path d="M887.8 82.1h6l-3 3.2z" fill="#777"/><path d="M929.3 32.8v-3h-13.2l7 6.9-7 6.9h13.2v-3" fill="none" stroke="#4a4a4a" stroke-width="2"/><path d="M936.6 35.9h6l-3 3.2z" fill="#777"/><rect x="916.5" y="52.5" width="13" height="15" fill="#fff" stroke="#888"/><rect x="916" y="52" width="14" height="4" fill="#777"/><path d="M923 57.3v7.2M919.6 61.2l3.4 3.4 3.4-3.4" fill="none" stroke="#3e7cbf" stroke-width="2"/><path d="M934.5 59h6l-3 3.2z" fill="#777"/><path d="M916 84.3l8.2-8.3 5.3 5.3-6.7 6.7h-3.4z" fill="#e8879b"/><path d="M917.8 82.6l4.6 4.6" stroke="#f3f3f3" stroke-width="1"/><path d="M921 88.7h9" stroke="#777" stroke-width="1"/><path d="M934.5 82.1h6l-3 3.2z" fill="#777"/><text x="956.9" y="44" font-family="Liberation Sans, sans-serif" font-size="16.4" stroke="#3e7cbf" stroke-width="0.7" fill="#3e7cbf" textLength="11" lengthAdjust="spacingAndGlyphs">A</text><text x="957.8" y="57.9" font-family="Liberation Sans, sans-serif" font-size="15.8" stroke="#9352b5" stroke-width="0.7" fill="#9352b5" textLength="9.6" lengthAdjust="spacingAndGlyphs">Z</text><path d="M969 39.5h17.2l-7 7.5v6.5h-3.2v-6.5z" fill="#7a7a7a"/><path d="M977.1 47.5v5.2h1v-5.2z" fill="#f3f3f3"/><path d="M988.3 86.2h6l-3 3.2z" fill="#777"/><circle cx="1036.2" cy="40.6" r="8.9" fill="#fff" stroke="#3e7cbf" stroke-width="1.8"/><path d="M1029.4 47.4l-8.3 8.5" stroke="#3e7cbf" stroke-width="3.6" stroke-linecap="round"/><path d="M1060.6 86.2h6l-3 3.2z" fill="#777"/><path d="M1096.9 109.7l3.8-4 3.8 4" fill="none" stroke="#5f5f5f" stroke-width="1.9"/><path d="M681.5 12.5c-1.6-1.4-2.3-2.6-2.3-4.2a4.5 4.5 0 0 1 9 0c0 1.6-0.7 2.8-2.3 4.2v1.7h-4.4zM681.5 16.4h4.4" fill="none" stroke="#fff" stroke-width="1"/><circle cx="1025.3" cy="8.7" r="4.2" fill="none" stroke="#fff" stroke-width="1.3"/><path d="M1018.2 18.8c0.5-3.4 2.2-5.4 4.6-6.4M1030 11.8v6.6M1026.7 15.1h6.6" fill="none" stroke="#fff" stroke-width="1.3"/></svg>
<div class="b" style="left:5px;top:126px;width:102px;height:26px;background:#fff;border:1px solid #c6c6c6;"></div>
<div class="t " style="left:12.3px;top:134px;font-size:12.6px;color:#444;letter-spacing:-0.172px;">I35</div>
<svg style="left:92.6px;top:136px" width="7.4" height="4" viewBox="0 0 7.4 4"><path d="M0 0H7.4L3.7 4Z" fill="#7d7d7d"/></svg>
<div class="b" style="left:121px;top:134px;width:2px;height:2px;background:#bdbdbd;"></div>
<div class="b" style="left:121px;top:138px;width:2px;height:2px;background:#bdbdbd;"></div>
<div class="b" style="left:121px;top:142px;width:2px;height:2px;background:#bdbdbd;"></div>
<div class="b" style="left:137px;top:126px;width:110px;height:26px;background:#fff;border:1px solid #c6c6c6;"></div>
<svg style="left:150px;top:133px" width="12" height="12" viewBox="0 0 12 12"><path d="M1 1L11 11M11 1L1 11" stroke="#c8c8c8" stroke-width="1.6" fill="none"/></svg>
<svg style="left:185px;top:133px" width="14" height="12" viewBox="0 0 14 12"><path d="M1 7L5 11L13 1" stroke="#c8c8c8" stroke-width="2" fill="none"/></svg>
<div class="t" style="left:223px;top:131px;font-family:'Liberation Serif',serif;font-style:italic;font-weight:bold;font-size:14px;color:#5a5a5a;letter-spacing:0.3px;">f<span style="font-size:10.5px;">x</span></div>
<div class="b" style="left:250px;top:126px;width:860px;height:26px;background:#fff;border:1px solid #c6c6c6;"></div>
<svg style="left:1097px;top:135px" width="9" height="6" viewBox="0 0 9 6"><path d="M1.2 1.2L4.5 4.5L7.8 1.2" stroke="#555" stroke-width="1.7" fill="none"/></svg>
<div class="b" style="left:1097px;top:164px;width:15px;height:498px;background:#d9d9d9;"></div>
<div class="b" style="left:1097px;top:164px;width:15px;height:15px;background:#fff;border:1px solid #bdbdbd;"></div>
<svg style="left:1101px;top:169px" width="7" height="4" viewBox="0 0 7 4"><path d="M0 4H7L3.5 0Z" fill="#777"/></svg>
<div class="b" style="left:1097px;top:228px;width:15px;height:388px;background:#fff;border:1px solid #bdbdbd;"></div>
<div class="b" style="left:1097px;top:647px;width:15px;height:15px;background:#fff;border:1px solid #bdbdbd;"></div>
<svg style="left:1101px;top:653px" width="7" height="4" viewBox="0 0 7 4"><path d="M0 0H7L3.5 4Z" fill="#777"/></svg>
<div class="b" style="left:686px;top:669px;width:408px;height:15px;background:#d9d9d9;"></div>
<div class="b" style="left:686px;top:669px;width:16px;height:15px;background:#fff;border:1px solid #bdbdbd;"></div>
<svg style="left:691px;top:673px" width="4" height="7" viewBox="0 0 4 7"><path d="M4 0V7L0 3.5Z" fill="#666"/></svg>
<div class="b" style="left:701px;top:669px;width:343px;height:15px;background:#fff;border:1px solid #bdbdbd;"></div>
<div class="b" style="left:1079px;top:669px;width:15px;height:15px;background:#fff;border:1px solid #bdbdbd;"></div>
<svg style="left:1085px;top:673px" width="4" height="7" viewBox="0 0 4 7"><path d="M0 0V7L4 3.5Z" fill="#666"/></svg>
<div class="b" style="left:669px;top:671px;width:2px;height:2px;background:#bdbdbd;"></div>
<div class="b" style="left:669px;top:675px;width:2px;height:2px;background:#bdbdbd;"></div>
<div class="b" style="left:669px;top:679px;width:2px;height:2px;background:#bdbdbd;"></div>
<svg style="left:26px;top:671px" width="5" height="9" viewBox="0 0 5 9"><path d="M5 0V9L0 4.5Z" fill="#c6c6c6"/></svg>
<svg style="left:55px;top:671px" width="5" height="9" viewBox="0 0 5 9"><path d="M0 0V9L5 4.5Z" fill="#c6c6c6"/></svg>
<div class="b" style="left:100px;top:666px;width:1px;height:20px;background:#ababab;"></div>
<div class="t " style="left:113px;top:669px;font-size:13px;color:#444;letter-spacing:-0.051px;">Registro</div>
<div class="b" style="left:179px;top:661px;width:64px;height:26px;background:#fff;border-bottom:2px solid #217346;border-left:1px solid #a6a6a6;border-right:1px solid #a6a6a6;border-top:1px solid #d9d9d9;"></div>
<div class="t " style="left:191.7px;top:669px;font-size:13px;color:#217346;letter-spacing:-0.224px;font-weight:bold;">Datos</div>
<svg style="left:275px;top:667px" width="17" height="17" viewBox="0 0 17 17"><circle cx="8.5" cy="8.5" r="7.3" fill="none" stroke="#767676" stroke-width="1.2"/><path d="M8.5 4.5V12.5M4.5 8.5H12.5" stroke="#767676" stroke-width="1.4"/></svg>
</body></html>
